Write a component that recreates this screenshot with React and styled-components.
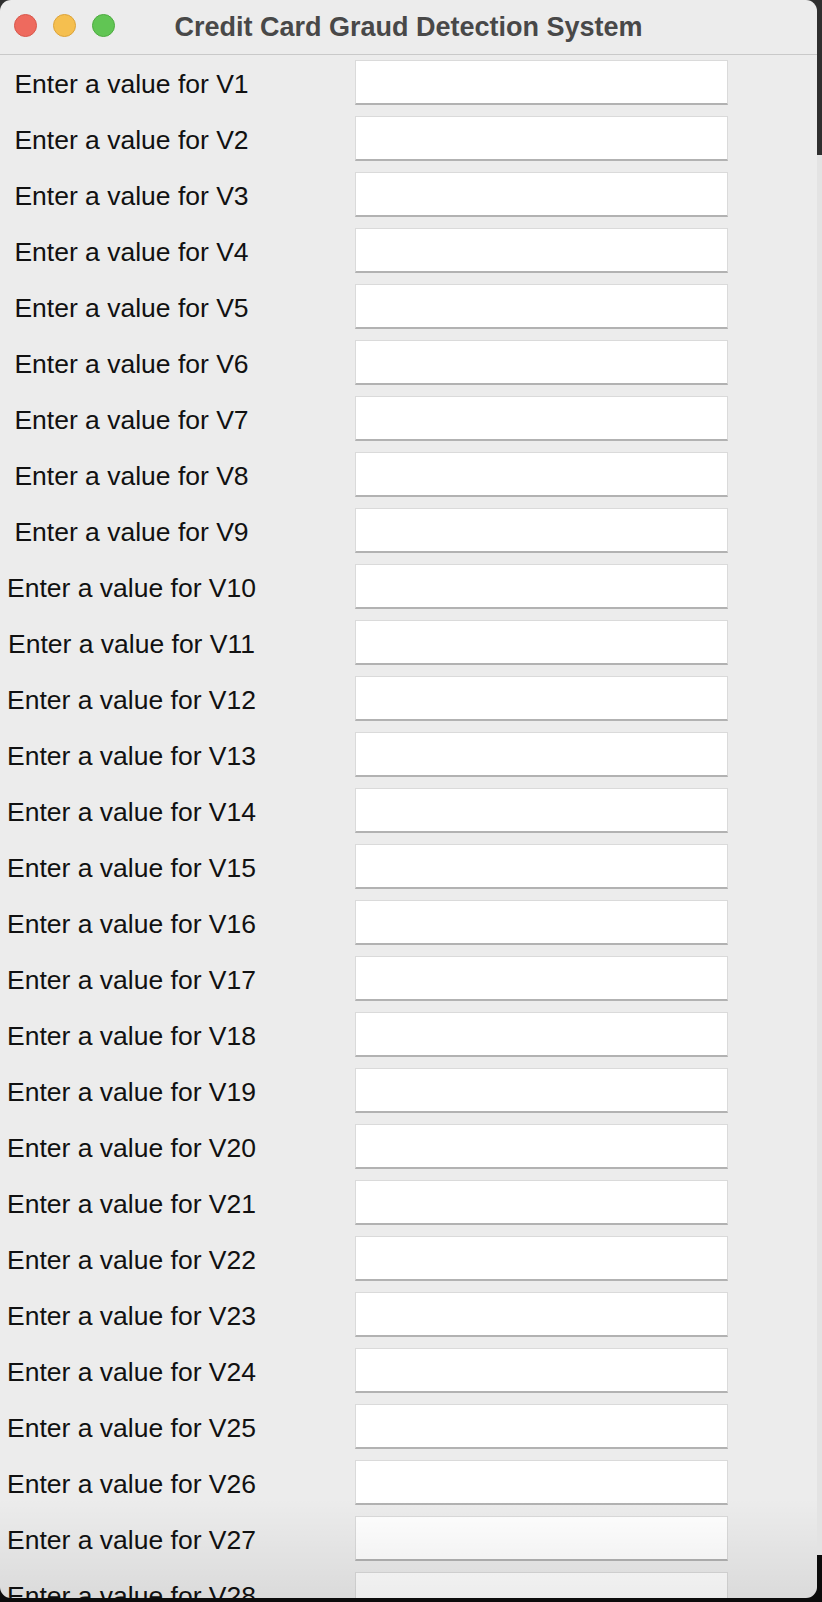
import React from 'react'
import styled, { createGlobalStyle } from 'styled-components'

const GlobalStyle = createGlobalStyle`
html, body {
    margin: 0;
    padding: 0;
    background: #111;
}
`

const Desktop = styled.div`
width: 822px;
height: 1602px;
overflow: hidden;
background: linear-gradient(to bottom, #2f2f2f 0 155px, #e3e3e3 155px 1555px, #0c0c0c 1555px);
`

const Window = styled.div`
position: relative;
width: 817px;
height: 1598px;
border-radius: 11px;
overflow: hidden;
background: #ececec;
display: flex;
flex-direction: column;
font-family: "Liberation Sans", Arial, sans-serif;
`

const TitleBar = styled.div`
position: relative;
flex: 0 0 54px;
display: flex;
align-items: center;
justify-content: center;
border-bottom: 1px solid #c9c9c9;
`

const Lights = styled.div`
position: absolute;
left: 14px;
top: 14px;
display: flex;
gap: 16px;
`

const Light = styled.span`
width: 23px;
height: 23px;
border-radius: 50%;
box-sizing: border-box;
background: ${props => props.color};
border: 1px solid ${props => props.edge};
`

const Title = styled.h1`
margin: 0;
font-size: 27px;
font-weight: 700;
color: #484848;
letter-spacing: 0;
`

const Form = styled.div`
display: grid;
grid-template-columns: 263px 373px;
column-gap: 92px;
row-gap: 11px;
grid-auto-rows: 45px;
padding-top: 5px;
`

const Label = styled.label`
justify-self: center;
align-self: center;
margin-top: 3px;
font-size: 26.5px;
color: #111;
white-space: nowrap;
`

const Field = styled.input`
box-sizing: border-box;
width: 100%;
height: 45px;
margin: 0;
padding: 0 6px;
background: #fff;
border: 1px solid #dadada;
border-bottom: 2px solid #b2b2b2;
border-radius: 0;
outline: none;
font: inherit;
font-size: 20px;
`

const Shade = styled.div`
position: absolute;
left: 0;
right: 0;
bottom: 0;
height: 100px;
pointer-events: none;
background: linear-gradient(to bottom, rgba(0, 0, 0, 0), rgba(0, 0, 0, 0.075));
`

const fields = Array.from({ length: 28 }, (_, i) => `V${i + 1}`)

const App = () => {
    return (
        <Desktop>
            <GlobalStyle />
            <Window>
                <TitleBar>
                    <Lights>
                        <Light color='#ee6a5e' edge='#d8574b' />
                        <Light color='#f5bf4f' edge='#dca339' />
                        <Light color='#61c554' edge='#4dab40' />
                    </Lights>
                    <Title>Credit Card Graud Detection System</Title>
                </TitleBar>
                <Form>
                    {fields.map(name => (
                        <React.Fragment key={name}>
                            <Label htmlFor={name}>Enter a value for {name}</Label>
                            <Field id={name} type='text' />
                        </React.Fragment>
                    ))}
                </Form>
                <Shade />
            </Window>
        </Desktop>
    )
}

export default App
